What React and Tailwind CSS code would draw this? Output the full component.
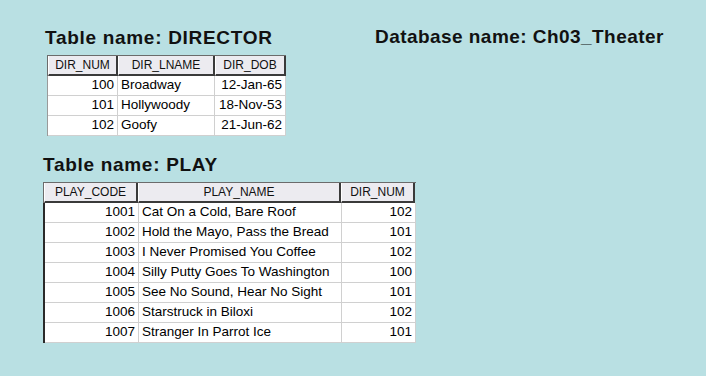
import React from "react";

const director = [
  ["100", "Broadway", "12-Jan-65"],
  ["101", "Hollywoody", "18-Nov-53"],
  ["102", "Goofy", "21-Jun-62"],
];

const play = [
  ["1001", "Cat On a Cold, Bare Roof", "102"],
  ["1002", "Hold the Mayo, Pass the Bread", "101"],
  ["1003", "I Never Promised You Coffee", "102"],
  ["1004", "Silly Putty Goes To Washington", "100"],
  ["1005", "See No Sound, Hear No Sight", "101"],
  ["1006", "Starstruck in Biloxi", "102"],
  ["1007", "Stranger In Parrot Ice", "101"],
];

function Header({ cols }) {
  return (
    <div className="flex border-t border-l border-[#6b6b6b]">
      {cols.map(([label, w], i) => (
        <div
          key={i}
          style={{ width: w }}
          className="h-[20px] bg-[#ecebf0] border-r-2 border-b-2 border-[#3a3a3a] border-l border-l-white flex items-center justify-center text-[12px] text-[#111]"
        >
          {label}
        </div>
      ))}
    </div>
  );
}

function Row({ cells, cols, dark }) {
  return (
    <div className={"flex " + (dark ? "border-l-2 border-[#2a2a2a]" : "border-l border-[#9a9a9a]")}>
      {cells.map((c, i) => (
        <div
          key={i}
          style={{ width: cols[i][0] }}
          className={
            "h-[20px] bg-white border-r border-b border-[#d0d0d0] flex items-center text-[13.5px] text-black whitespace-nowrap " +
            (cols[i][1] === "r" ? "justify-end pr-[3px]" : "justify-start pl-[3px]")
          }
        >
          {c}
        </div>
      ))}
    </div>
  );
}

export default function App() {
  const dirCols = [
    ["DIR_NUM", 70],
    ["DIR_LNAME", 97],
    ["DIR_DOB", 71],
  ];
  const dirBody = [
    [70, "r"],
    [97, "l"],
    [71, "r"],
  ];
  const playCols = [
    ["PLAY_CODE", 94],
    ["PLAY_NAME", 203],
    ["DIR_NUM", 74],
  ];
  const playBody = [
    [94, "r"],
    [203, "l"],
    [74, "r"],
  ];
  return (
    <div
      className="w-[706px] h-[376px] bg-[#b9e0e3] overflow-hidden pl-[43px] pt-[26px]"
      style={{ fontFamily: '"Liberation Sans", Arial, sans-serif' }}
    >
      <div className="flex">
        <div className="w-[332px] flex flex-col">
          <div className="pl-[2px] text-[19px] font-bold tracking-[0.7px] leading-[24px] text-[#111]">Table name: DIRECTOR</div>
          <div className="ml-[4px] mt-[5px] w-fit">
            <Header cols={dirCols} />
            {director.map((r, i) => (
              <Row key={i} cells={r} cols={dirBody} />
            ))}
          </div>
        </div>
        <div className="-mt-[1px] text-[19px] font-bold tracking-[0.45px] leading-[24px] text-[#111]">Database name: Ch03_Theater</div>
      </div>
      <div className="mt-[17px] text-[19px] font-bold tracking-[0.7px] leading-[24px] text-[#111]">Table name: PLAY</div>
      <div className="mt-[5px] w-fit">
        <Header cols={playCols} />
        {play.map((r, i) => (
          <Row key={i} cells={r} cols={playBody} dark />
        ))}
      </div>
    </div>
  );
}
